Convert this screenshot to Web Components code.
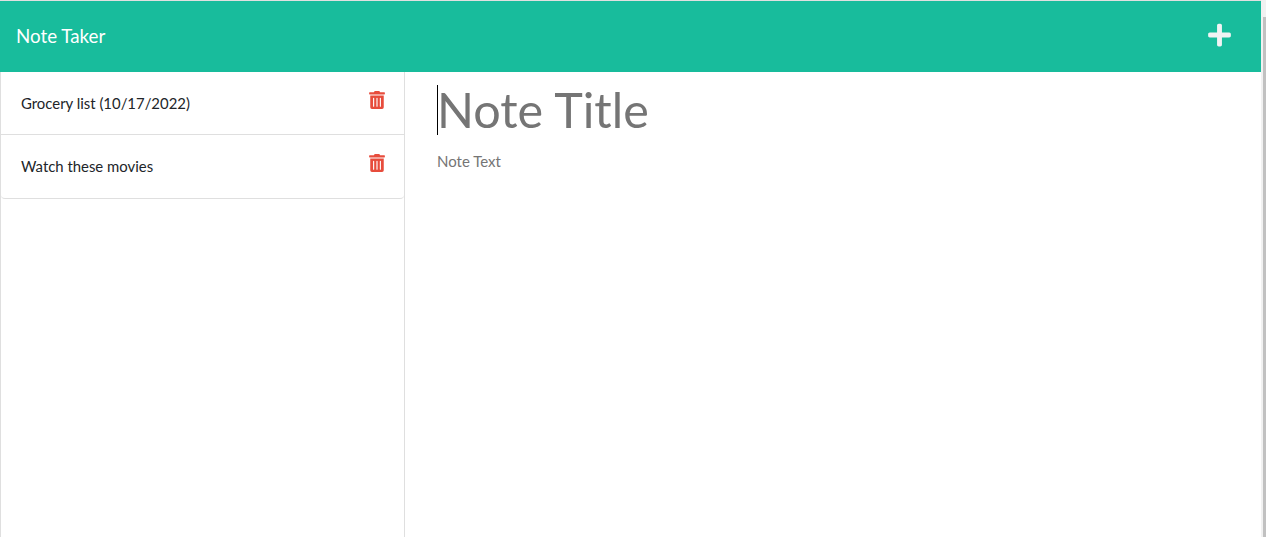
<!DOCTYPE html>
<html lang="en">
<head>
<meta charset="utf-8">
<title>Note Taker</title>
<style>
  html, body { margin: 0; height: 100%; overflow: hidden; background: #fff; }
  body { font-family: Lato, "Liberation Sans", sans-serif; }
</style>
</head>
<body>
<note-app>
  <note-navbar slot="nav">Note Taker</note-navbar>
  <note-list slot="list">
    <note-item>Grocery list (10/17/2022)</note-item>
    <note-item last>Watch these movies</note-item>
  </note-list>
  <note-editor slot="editor"></note-editor>
</note-app>

<script>
class NoteApp extends HTMLElement {
  constructor() {
    super();
    this.attachShadow({ mode: 'open' });
    this.shadowRoot.innerHTML = `
      <style>
        :host { display: flex; height: 537px; overflow: hidden; }
        .page { width: 1261px; display: flex; flex-direction: column; border-top: 1px solid #e0e0e0; box-sizing: border-box; }
        .columns { flex: 1; display: flex; min-height: 0; }
        .track { width: 5px; background: #f1f1f1; display: flex; justify-content: flex-end; }
        .thumb { width: 3px; margin-top: 17px; background: #c1c1c1; }
      </style>
      <div class="page">
        <slot name="nav"></slot>
        <div class="columns">
          <slot name="list"></slot>
          <slot name="editor"></slot>
        </div>
      </div>
      <div class="track"><div class="thumb"></div></div>
    `;
  }
}

class NoteNavbar extends HTMLElement {
  constructor() {
    super();
    this.attachShadow({ mode: 'open' });
    this.shadowRoot.innerHTML = `
      <style>
        :host { display: flex; align-items: center; justify-content: space-between; height: 71px; padding: 0 30px 0 16px; background: #18bc9c; color: #fff; font-size: 18.75px; }
        span { display: block; margin-top: -2px; }
        svg { width: 23px; height: 26px; fill: #f1f3f4; display: block; margin-top: -3px; }
      </style>
      <span><slot></slot></span>
      <svg viewBox="0 0 448 512"><path d="M416 208H272V64c0-17.67-14.33-32-32-32h-32c-17.67 0-32 14.33-32 32v144H32c-17.67 0-32 14.33-32 32v32c0 17.67 14.33 32 32 32h144v144c0 17.67 14.33 32 32 32h32c17.67 0 32-14.33 32-32V304h144c17.67 0 32-14.33 32-32v-32c0-17.67-14.33-32-32-32z"/></svg>
    `;
  }
}

class NoteList extends HTMLElement {
  constructor() {
    super();
    this.attachShadow({ mode: 'open' });
    this.shadowRoot.innerHTML = `
      <style>
        :host { display: block; width: 405px; box-sizing: border-box; border-left: 1px solid #dfdfdf; border-right: 1px solid #dfdfdf; flex: none; height: 100%; }
      </style>
      <slot></slot>
    `;
  }
}

class NoteItem extends HTMLElement {
  constructor() {
    super();
    this.attachShadow({ mode: 'open' });
    this.shadowRoot.innerHTML = `
      <style>
        :host { display: flex; justify-content: space-between; height: 63px; box-sizing: border-box; padding: 20px 19px 0 20px; border-bottom: 1px solid #dfdfdf; font-size: 14.9px; line-height: 22px; color: #212529; }
        :host([last]) { height: 64px; border-bottom-left-radius: 4px; border-bottom-right-radius: 4px; }
        svg { width: 16px; height: 18px; fill: #e74c3c; display: block; margin-top: -1px; }
      </style>
      <span><slot></slot></span>
      <svg viewBox="0 0 448 512"><path d="M32 464a48 48 0 0 0 48 48h288a48 48 0 0 0 48-48V128H32zm272-256a16 16 0 0 1 32 0v224a16 16 0 0 1-32 0zm-96 0a16 16 0 0 1 32 0v224a16 16 0 0 1-32 0zm-96 0a16 16 0 0 1 32 0v224a16 16 0 0 1-32 0zM432 32H312l-9.4-18.7A24 24 0 0 0 281.1 0H166.8a23.72 23.72 0 0 0-21.4 13.3L136 32H16A16 16 0 0 0 0 48v32a16 16 0 0 0 16 16h416a16 16 0 0 0 16-16V48a16 16 0 0 0-16-16z"/></svg>
    `;
  }
}

class NoteEditor extends HTMLElement {
  constructor() {
    super();
    this.attachShadow({ mode: 'open' });
    this.shadowRoot.innerHTML = `
      <style>
        :host { display: flex; flex-direction: column; flex: 1; padding: 13px 0 0 32px; color: #757575; }
        .title { font-size: 48.5px; line-height: 48px; padding-bottom: 2px; border-left: 1px solid #000; text-indent: -1px; width: max-content; }
        .text { font-size: 15px; line-height: 22px; margin-top: 15px; }
      </style>
      <div class="title">Note Title</div>
      <div class="text">Note Text</div>
    `;
  }
}

customElements.define('note-app', NoteApp);
customElements.define('note-navbar', NoteNavbar);
customElements.define('note-list', NoteList);
customElements.define('note-item', NoteItem);
customElements.define('note-editor', NoteEditor);
</script>
</body>
</html>
